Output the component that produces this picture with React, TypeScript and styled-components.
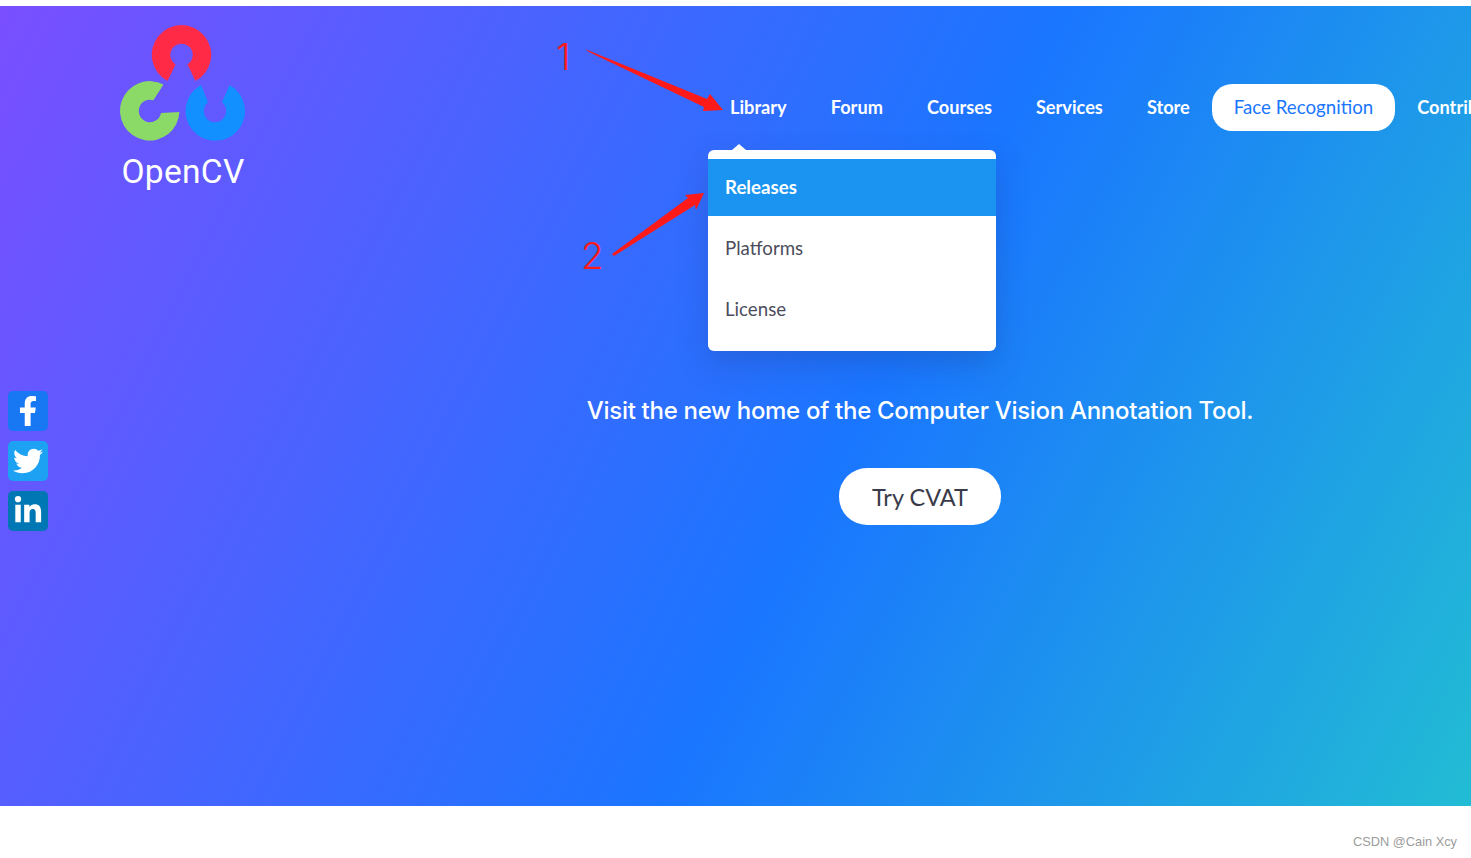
import React from "react";
import styled, { createGlobalStyle } from "styled-components";
import { FaFacebookF, FaTwitter, FaLinkedinIn } from "react-icons/fa";

const navItems = ["Library", "Forum", "Courses", "Services", "Store"];
const menuItems = ["Releases", "Platforms", "License"];

const App: React.FC = () => {
  return (
    <Page>
      <GlobalStyle />
      <Hero>
        <Header>
          <Logo>
            <svg width="130" height="120" viewBox="118 24 130 120">
              <path
                d="M167.5 81 A29.7 29.7 0 1 1 195.5 81 L187.5 64.4 A11.2 11.2 0 1 0 175.5 64.4 Z"
                fill="#ff2a45"
              />
              <path
                d="M163.5 84.5 A29.7 29.7 0 1 0 179.4 112 L161 113 A11.2 11.2 0 1 1 153.4 100.3 Z"
                fill="#8bda67"
              />
              <path
                d="M201 85 A29.7 29.7 0 1 0 229.6 85 L222 102.3 A11.2 11.2 0 1 1 208 102.3 Z"
                fill="#1290ff"
              />
            </svg>
            <LogoText>OpenCV</LogoText>
          </Logo>
          <Nav>
            {navItems.map((item, i) => (
              <NavItem key={item}>
                {item}
                {i === 0 && (
                  <Dropdown>
                    {menuItems.map((m, j) => (
                      <MenuRow key={m} $active={j === 0}>
                        {m}
                      </MenuRow>
                    ))}
                  </Dropdown>
                )}
              </NavItem>
            ))}
            <PillItem>Face Recognition</PillItem>
            <NavItem>Contribute</NavItem>
          </Nav>
        </Header>

        <Content>
          <Headline>Visit the new home of the Computer Vision Annotation Tool.</Headline>
          <TryButton>Try CVAT</TryButton>
        </Content>

        <SocialBar>
          <SocialLink $bg="#1877f2">
            <FaFacebookF />
          </SocialLink>
          <SocialLink $bg="#1da1f2">
            <FaTwitter />
          </SocialLink>
          <SocialLink $bg="#0077b5">
            <FaLinkedinIn />
          </SocialLink>
        </SocialBar>

        <Arrows width="1471" height="800" viewBox="0 6 1471 800">
          <polygon points="586,49.5 707,99 710,94 723,110 703,111 704,107 588,51.5" fill="#ff1a1a" />
          <polygon points="612,254 688,198 685,195 704,193 696,210 695,205 614,256" fill="#ff1a1a" />
        </Arrows>
        <Mark $left={556} $top={30}>1</Mark>
        <Mark $left={581} $top={229}>2</Mark>
      </Hero>
      <Footer>CSDN @Cain Xcy</Footer>
    </Page>
  );
};

export default App;

const GlobalStyle = createGlobalStyle`
  body {
    margin: 0;
    background: #fff;
  }
`;

const Page = styled.div`
  width: 1471px;
  height: 858px;
  padding-top: 6px;
  box-sizing: border-box;
  overflow: hidden;
  font-family: "Lato", "Open Sans", sans-serif;
`;

const Hero = styled.section`
  position: relative;
  height: 800px;
  overflow: hidden;
  background: linear-gradient(117deg, #7a4fff 0%, #1a76ff 57%, #22bcd4 100%);
`;

const Header = styled.header`
  display: flex;
  align-items: flex-start;
  height: 370px;
  padding: 18px 0 0 118px;
  box-sizing: border-box;
`;

const Logo = styled.div`
  width: 130px;
  flex-shrink: 0;
  display: flex;
  flex-direction: column;
  align-items: center;
  svg {
    display: block;
  }
`;

const LogoText = styled.div`
  margin-top: 8px;
  color: #fff;
  font-family: "Roboto", sans-serif;
  font-size: 33.5px;
  line-height: 40px;
  letter-spacing: 0.3px;
`;

const Nav = styled.nav`
  display: flex;
  flex-shrink: 0;
  margin: 60px 0 0 460px;
`;

const NavItem = styled.div`
  position: relative;
  height: 47px;
  padding: 0 22px 2px;
  box-sizing: border-box;
  display: flex;
  align-items: center;
  color: #fff;
  font-size: 18.2px;
  font-weight: 700;
  white-space: nowrap;
`;

const PillItem = styled(NavItem)`
  background: #fff;
  color: #1a76ff;
  font-size: 18.7px;
  font-weight: 400;
  border-radius: 20px;
`;

const Dropdown = styled.div`
  position: absolute;
  top: 66px;
  left: 0;
  width: 288px;
  height: 201px;
  padding-top: 9px;
  box-sizing: border-box;
  background: #fff;
  border-radius: 6px;
  box-shadow: 0 12px 30px rgba(30, 50, 120, 0.25);

  &::before {
    content: "";
    position: absolute;
    top: -6px;
    left: 24px;
    border-left: 7px solid transparent;
    border-right: 7px solid transparent;
    border-bottom: 6px solid #fff;
  }
`;

const MenuRow = styled.div<{ $active?: boolean }>`
  height: 57px;
  margin-bottom: 4px;
  padding: 0 0 2px 17px;
  box-sizing: border-box;
  display: flex;
  align-items: center;
  font-size: 18.7px;
  font-weight: ${(p) => (p.$active ? 700 : 400)};
  color: ${(p) => (p.$active ? "#fff" : "#4b4d5c")};
  background: ${(p) => (p.$active ? "#1a94f0" : "transparent")};
`;

const Content = styled.div`
  padding-left: 369px;
  display: flex;
  flex-direction: column;
  align-items: center;
`;

const Headline = styled.h2`
  margin: 20px 0 0;
  color: #fff;
  font-family: "Inter", sans-serif;
  font-size: 24px;
  line-height: 30px;
  font-weight: 500;
  letter-spacing: -0.3px;
  white-space: nowrap;
`;

const TryButton = styled.button`
  margin-top: 42px;
  width: 162px;
  height: 57px;
  border: 0;
  border-radius: 28px;
  background: #fff;
  color: #3a3b4a;
  font-family: "Lato", sans-serif;
  font-size: 23.5px;
`;

const SocialBar = styled.div`
  position: absolute;
  left: 8px;
  top: 385px;
  display: flex;
  flex-direction: column;
  gap: 10px;
`;

const SocialLink = styled.a<{ $bg: string }>`
  width: 40px;
  height: 40px;
  border-radius: 5px;
  background: ${(p) => p.$bg};
  color: #fff;
  display: flex;
  align-items: center;
  justify-content: center;
  font-size: 30px;
`;

const Arrows = styled.svg`
  position: absolute;
  left: 0;
  top: 0;
  pointer-events: none;
`;

const Mark = styled.span<{ $left: number; $top: number }>`
  position: absolute;
  left: ${(p) => p.$left}px;
  top: ${(p) => p.$top}px;
  color: #ff1a1a;
  font-family: "Inter", sans-serif;
  font-weight: 300;
  font-size: 37px;
  line-height: 42px;
`;

const Footer = styled.footer`
  height: 52px;
  padding: 28px 14px 0 0;
  box-sizing: border-box;
  text-align: right;
  color: #9c9c9c;
  font-family: "Liberation Sans", sans-serif;
  font-size: 12.8px;
  line-height: 15px;
`;
